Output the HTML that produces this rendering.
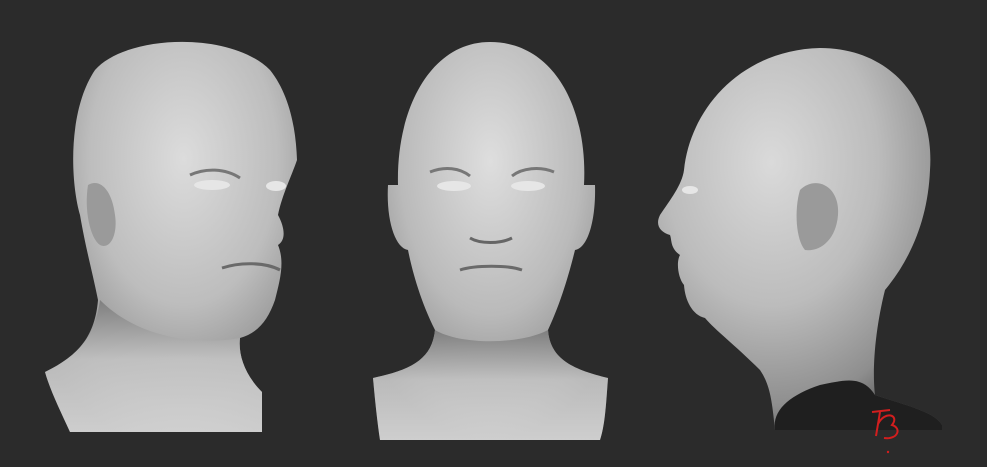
<!DOCTYPE html>
<html><head><meta charset="utf-8"><style>
html,body{margin:0;padding:0;background:#2b2b2b;width:987px;height:467px;overflow:hidden}
svg{display:block}
</style></head><body>
<svg width="987" height="467" viewBox="0 0 987 467" xmlns="http://www.w3.org/2000/svg">
<defs>
<radialGradient id="g1" cx="0.55" cy="0.3" r="0.75">
<stop offset="0" stop-color="#dcdcdc"/><stop offset="0.5" stop-color="#bdbdbd"/><stop offset="0.85" stop-color="#8a8a8a"/><stop offset="1" stop-color="#5a5a5a"/></radialGradient>
<radialGradient id="g2" cx="0.5" cy="0.3" r="0.7">
<stop offset="0" stop-color="#dedede"/><stop offset="0.55" stop-color="#bababa"/><stop offset="0.9" stop-color="#8a8a8a"/><stop offset="1" stop-color="#606060"/></radialGradient>
<radialGradient id="g3" cx="0.4" cy="0.3" r="0.75">
<stop offset="0" stop-color="#dadada"/><stop offset="0.5" stop-color="#bcbcbc"/><stop offset="0.85" stop-color="#8e8e8e"/><stop offset="1" stop-color="#606060"/></radialGradient>
<linearGradient id="neck" x1="0" y1="0" x2="0" y2="1">
<stop offset="0" stop-color="#7a7a7a"/><stop offset="0.45" stop-color="#c4c4c4"/><stop offset="1" stop-color="#dadada"/></linearGradient>
</defs>
<!-- Head 1 -->
<path d="M45,372 C80,355 95,335 98,300 C92,270 86,250 80,215 C70,180 68,110 95,70 C125,35 230,30 270,70 C290,95 296,130 297,160 C292,175 282,195 278,215 C285,228 286,240 278,245 C285,262 280,280 275,300 C268,320 258,333 240,338 C238,355 245,375 262,392 L262,432 L70,432 C60,410 50,390 45,372 Z" fill="url(#g1)"/>
<path d="M100,300 C140,340 200,345 240,338 C238,355 245,375 262,392 L262,432 L70,432 C60,410 50,390 45,372 C80,355 95,335 100,300Z" fill="url(#neck)" opacity="0.9"/>
<path d="M88,185 C100,178 112,190 115,215 C118,235 110,250 100,245 C90,238 84,210 88,185Z" fill="#9a9a9a"/>
<ellipse cx="212" cy="185" rx="18" ry="5" fill="#e6e6e6"/><ellipse cx="276" cy="186" rx="10" ry="5" fill="#e6e6e6"/>
<path d="M190,175 C205,168 225,168 240,178" stroke="#777" stroke-width="3" fill="none"/>
<path d="M222,268 C240,262 265,262 280,270" stroke="#6a6a6a" stroke-width="3" fill="none"/>
<!-- Head 2 -->
<path d="M373,378 C410,370 432,360 435,330 C420,300 412,270 408,250 C395,248 386,220 388,185 L398,185 C396,110 430,42 490,42 C555,42 588,110 584,185 L595,185 C596,220 588,248 575,250 C570,270 562,300 548,330 C550,360 575,370 608,378 C606,405 605,425 600,440 L380,440 C377,420 375,400 373,378Z" fill="url(#g2)"/>
<path d="M435,330 C460,345 520,345 548,330 C550,360 575,370 608,378 C606,405 605,425 600,440 L380,440 C377,420 375,400 373,378 C410,370 432,360 435,330Z" fill="url(#neck)" opacity="0.9"/>
<ellipse cx="454" cy="186" rx="17" ry="5" fill="#e6e6e6"/><ellipse cx="528" cy="186" rx="17" ry="5" fill="#e6e6e6"/>
<path d="M430,172 C445,166 460,168 470,176 M512,176 C522,168 540,166 554,172" stroke="#777" stroke-width="3" fill="none"/>
<path d="M470,238 C480,244 500,244 512,238" stroke="#666" stroke-width="3" fill="none"/>
<path d="M460,270 C475,265 508,265 522,270" stroke="#6a6a6a" stroke-width="3" fill="none"/>
<!-- Head 3 -->
<path d="M775,430 C772,400 770,385 760,370 C735,345 715,330 705,318 C692,315 685,300 684,285 C678,278 676,262 680,255 C670,248 672,240 670,235 C660,232 655,225 660,215 C670,200 682,185 684,170 C690,110 740,50 820,48 C890,48 935,100 930,170 C928,220 910,260 885,290 C875,330 872,370 875,395 C905,405 935,412 942,425 L942,430Z" fill="url(#g3)"/>
<path d="M875,395 C905,405 935,412 942,425 L942,430 L775,430 C772,410 790,395 820,385 C845,380 862,375 875,395Z" fill="#1f1f1f"/>
<path d="M800,190 C815,175 840,185 838,215 C836,240 820,252 805,250 C796,240 794,210 800,190Z" fill="#9a9a9a"/>
<ellipse cx="690" cy="190" rx="8" ry="4" fill="#e6e6e6"/>
<!-- signature -->
<path d="M872,412 L890,410 M880,412 L876,436 M878,424 C885,410 900,415 892,425 C902,428 898,440 884,438" stroke="#d21e1e" stroke-width="2" fill="none"/>
<circle cx="888" cy="452" r="1.2" fill="#d21e1e"/>
</svg>
</body></html>
